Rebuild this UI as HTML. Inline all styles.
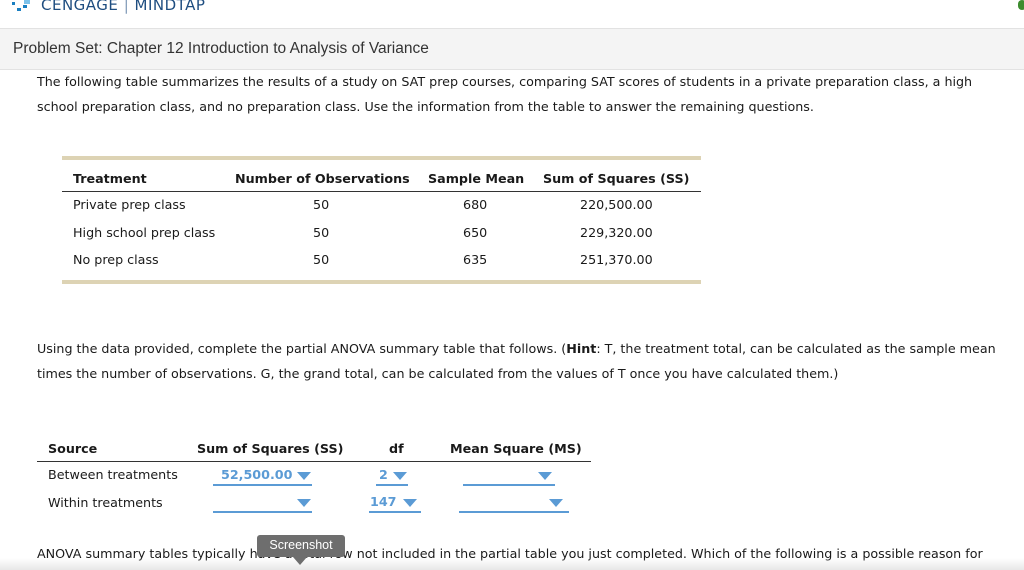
<!DOCTYPE html>
<html><head><style>
body{margin:0;width:1024px;height:570px;overflow:hidden;background:#fff;font-family:"DejaVu Sans","Liberation Sans",sans-serif;color:#1a1a1a;position:relative}
.a{position:absolute;white-space:nowrap}
.p{font-size:12.7px}
.b{font-weight:bold}
.dd{position:absolute;border-bottom:2px solid #5b9bd5;height:17px}
.dd .v{position:absolute;left:8px;top:0;color:#5b9bd5;font-weight:bold;font-size:12.7px}
.tri{position:absolute;top:5px;width:0;height:0;border-left:7px solid transparent;border-right:7px solid transparent;border-top:8px solid #5b9bd5}
</style></head><body>
<div class="a" style="left:0;top:0;width:1024px;height:28px;background:#fff;border-bottom:1px solid #e2e2e2"></div>
<svg class="a" style="left:10px;top:0" width="22" height="16"><rect x="2" y="2" width="3" height="3" fill="#1a7fc1"/><rect x="7" y="8" width="4" height="3" fill="#1a7fc1"/><rect x="14" y="0" width="6" height="4" fill="#7cc2ea"/><rect x="13" y="5" width="4" height="3" fill="#1a7fc1"/></svg>
<div class="a" style="left:41px;top:-4px;font-size:15px;color:#1e4d80;letter-spacing:0.5px">CENGAGE <span style="color:#1e4d80;font-weight:300">|</span> MINDTAP</div>
<div class="a" style="left:1018px;top:0;width:8px;height:10px;border-radius:4px;background:#3d8c2e"></div>
<div class="a" style="left:0;top:29px;width:1024px;height:40px;background:#f4f4f4;border-bottom:1px solid #e2e2e2"></div>
<div class="a" style="left:13px;top:40px;font-size:15.5px;color:#333;font-family:'Liberation Sans',sans-serif">Problem Set: Chapter 12 Introduction to Analysis of Variance</div>

<div class="a p" style="left:37px;top:74px">The following table summarizes the results of a study on SAT prep courses, comparing SAT scores of students in a private preparation class, a high</div>
<div class="a p" style="left:37px;top:99px">school preparation class, and no preparation class. Use the information from the table to answer the remaining questions.</div>

<div class="a" style="left:62px;top:156px;width:639px;height:4px;background:#ddd3b4"></div>
<div class="a" style="left:62px;top:280px;width:639px;height:4px;background:#ddd3b4"></div>
<div class="a" style="left:62px;top:191px;width:639px;height:1px;background:#333"></div>
<div class="a p b" style="left:73px;top:171px">Treatment</div>
<div class="a p b" style="left:235px;top:171px">Number of Observations</div>
<div class="a p b" style="left:428px;top:171px">Sample Mean</div>
<div class="a p b" style="left:543px;top:171px">Sum of Squares (SS)</div>
<div class="a p" style="left:73px;top:197px">Private prep class</div>
<div class="a p" style="left:73px;top:225px">High school prep class</div>
<div class="a p" style="left:73px;top:252px">No prep class</div>
<div class="a p" style="left:313px;top:197px">50</div><div class="a p" style="left:313px;top:225px">50</div><div class="a p" style="left:313px;top:252px">50</div>
<div class="a p" style="left:463px;top:197px">680</div><div class="a p" style="left:463px;top:225px">650</div><div class="a p" style="left:463px;top:252px">635</div>
<div class="a p" style="left:580px;top:197px">220,500.00</div><div class="a p" style="left:580px;top:225px">229,320.00</div><div class="a p" style="left:580px;top:252px">251,370.00</div>

<div class="a p" style="left:37px;top:341px">Using the data provided, complete the partial ANOVA summary table that follows. (<b>Hint</b>: T, the treatment total, can be calculated as the sample mean</div>
<div class="a p" style="left:37px;top:366px">times the number of observations. G, the grand total, can be calculated from the values of T once you have calculated them.)</div>

<div class="a p b" style="left:48px;top:441px">Source</div>
<div class="a p b" style="left:197px;top:441px">Sum of Squares (SS)</div>
<div class="a p b" style="left:389px;top:441px">df</div>
<div class="a p b" style="left:450px;top:441px">Mean Square (MS)</div>
<div class="a" style="left:37px;top:461px;width:554px;height:1px;background:#333"></div>
<div class="a p" style="left:48px;top:467px">Between treatments</div>
<div class="a p" style="left:48px;top:495px">Within treatments</div>

<div class="dd" style="left:213px;top:467px;width:99px"><span class="v">52,500.00</span><span class="tri" style="left:86px;margin-left:-2px"></span></div>
<div class="dd" style="left:213px;top:494px;width:99px"><span class="tri" style="left:84px"></span></div>
<div class="dd" style="left:376px;top:467px;width:32px"><span class="v" style="left:3px">2</span><span class="tri" style="left:17px"></span></div>
<div class="dd" style="left:369px;top:494px;width:52px"><span class="v" style="left:1px">147</span><span class="tri" style="left:34px"></span></div>
<div class="dd" style="left:463px;top:467px;width:92px"><span class="tri" style="left:75px"></span></div>
<div class="dd" style="left:459px;top:494px;width:110px"><span class="tri" style="left:90px"></span></div>

<div class="a p" style="left:37px;top:546px">ANOVA summary tables typically have a total row not included in the partial table you just completed. Which of the following is a possible reason for</div>
<div class="a" style="left:0;top:558px;width:1024px;height:12px;background:linear-gradient(rgba(240,240,240,0),rgba(225,225,225,.8))"></div>
<div class="a" style="left:257px;top:535px;width:88px;height:22px;background:#6e6e6e;border-radius:3px;color:#fff;font-size:12.5px;font-family:'Liberation Sans',sans-serif;text-align:center;line-height:21px">Screenshot</div>
<div class="a" style="left:293px;top:557px;width:0;height:0;border-left:7px solid transparent;border-right:7px solid transparent;border-top:8px solid #6e6e6e"></div>
</body></html>
